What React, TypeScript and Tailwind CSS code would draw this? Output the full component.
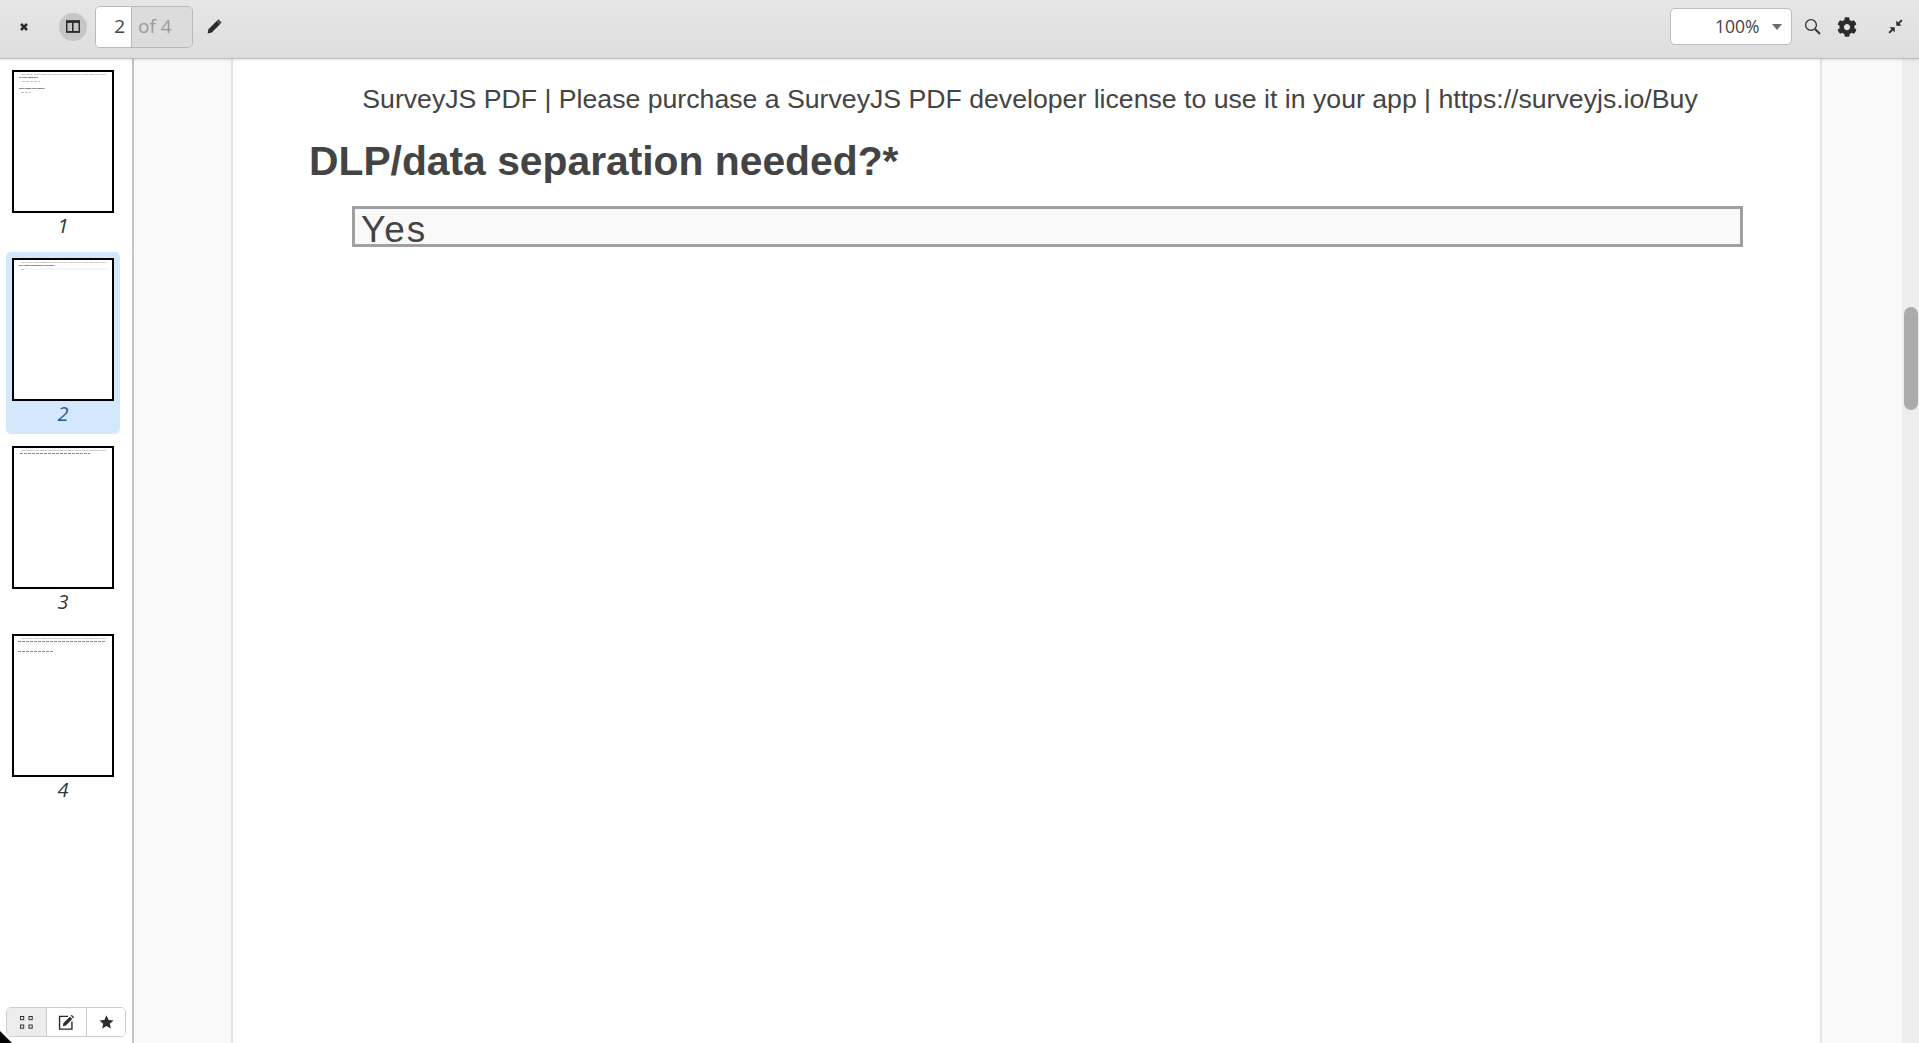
import React from 'react';
import { FaCog } from 'react-icons/fa';

const XIcon = () => (
  <svg width="10" height="10" viewBox="0 0 10 10" className="text-[#2c2c2c]">
    <path d="M2 2l6 6M8 2l-6 6" stroke="currentColor" strokeWidth="2.5" />
  </svg>
);

const SidebarIcon = () => (
  <svg width="14" height="13" viewBox="0 0 14 13">
    <rect x="0.75" y="1" width="12.5" height="11" fill="none" stroke="#2c2c2c" strokeWidth="1.5" />
    <rect x="0" y="0.5" width="14" height="2.4" fill="#2c2c2c" />
    <rect x="0" y="11" width="14" height="1.6" fill="#2c2c2c" />
    <rect x="6" y="1" width="1.6" height="11" fill="#2c2c2c" />
  </svg>
);

const PencilIcon = () => (
  <svg width="15" height="15" viewBox="0 0 15 15">
    <path d="M0.6 14.4l0.9-4.2L9.9 1.8l3.3 3.3-8.4 8.4z" fill="#2c2c2c" />
    <path d="M10.9 0.8l0.6-0.3 3 3-0.3 0.6-0.7 0.7-3.3-3.3z" fill="#2c2c2c" />
  </svg>
);

const SearchIcon = () => (
  <svg width="17" height="17" viewBox="0 0 17 17" fill="none" stroke="#333">
    <circle cx="7" cy="7" r="5.4" strokeWidth="1.3" />
    <path d="M11 11l5 5" strokeWidth="2" />
  </svg>
);

const CollapseIcon = () => (
  <svg width="15" height="15" viewBox="0 0 13 13">
    <path d="M12.6 1.6L10 4.2l1.6 1.6H7.2V1.4l1.6 1.6L11.4 0.4z" fill="#2c2c2c" />
    <path d="M0.4 11.4l2.6-2.6-1.6-1.6h4.4v4.4l-1.6-1.6-2.6 2.6z" fill="#2c2c2c" />
  </svg>
);

const GridIcon = () => (
  <svg width="13" height="13" viewBox="0 0 13 13" fill="none" stroke="#333" strokeWidth="1">
    <rect x="0.5" y="0.5" width="3.2" height="3.2" />
    <rect x="9" y="0.5" width="3.2" height="3.2" />
    <rect x="0.5" y="9" width="3.2" height="3.2" />
    <rect x="9" y="9" width="3.2" height="3.2" />
  </svg>
);

const NoteIcon = () => (
  <svg width="17" height="16" viewBox="0 0 15 15">
    <path d="M9 2.2H1v12h11.6V7" fill="none" stroke="#2c2c2c" strokeWidth="1.3" />
    <path d="M4 11.4l0.7-2.9 6-6 2.2 2.2-6 6z" fill="#2c2c2c" />
    <path d="M11.5 1.7l0.9-0.9 2.2 2.2-0.9 0.9z" fill="#2c2c2c" />
  </svg>
);

const StarIcon = () => (
  <svg width="15" height="14" viewBox="0 0 15 14">
    <path d="M7.5 0.3l2.1 4.6 5 .5-3.8 3.3 1.1 4.9-4.4-2.5-4.4 2.5 1.1-4.9L0.4 5.4l5-.5z" fill="#2c2c2c" />
  </svg>
);

const NOTICE = 'SurveyJS PDF | Please purchase a SurveyJS PDF developer license to use it in your app | https://surveyjs.io/Buy';

// tiny marks on the page previews; the wording there can't be read, dash bars stand in for it
const Dashes = ({ left, top, width, strong }: { left: number; top: number; width: number; strong?: boolean }) => (
  <div
    className={`absolute h-[1px] bg-[repeating-linear-gradient(90deg,currentColor_0,currentColor_3px,transparent_3px,transparent_4px)] ${strong ? 'text-[#8a8a8a]' : 'text-[#c4c4c4]'}`}
    style={{ left, top, width }}
  />
);

const Notice = () => (
  <div className="absolute left-0 right-0 top-[1px] whitespace-nowrap pl-[2px] text-center text-[1.7px] leading-[2px] text-[#666]">{NOTICE}</div>
);

const Heading = ({ top, children }: { top: number; children: React.ReactNode }) => (
  <div className="absolute left-[5px] whitespace-nowrap text-[2.5px] font-bold leading-[3px] text-[#222]" style={{ top }}>
    {children}
  </div>
);

const Thumb = ({ label, outer, selected, children }: { label: string; outer: string; selected?: boolean; children: React.ReactNode }) => (
  <div className={`w-[114px] rounded-[5px] px-[6px] ${outer} ${selected ? 'bg-[#d3e8fd]' : ''}`}>
    <div className="relative h-[143px] w-[102px] overflow-hidden border-2 border-black bg-white">{children}</div>
    <div className={`h-[26px] text-center font-['Open_Sans',sans-serif] text-[20px] italic leading-[26px] ${selected ? 'text-[#2b5b85]' : 'text-[#333]'}`}>
      {label}
    </div>
  </div>
);

const App: React.FC = () => {
  return (
    <div className="relative flex h-[1043px] w-[1919px] flex-col overflow-hidden bg-white font-['Liberation_Sans',sans-serif]">
      {/* Toolbar */}
      <header className="z-10 flex h-[59px] flex-none items-center border-b border-[#bdbdbd] bg-gradient-to-b from-[#e6e6e6] to-[#dedede] pb-[5px] font-['Open_Sans',sans-serif] shadow-[0_1px_3px_rgba(0,0,0,0.12)]">
        <div className="ml-[19px] flex w-[10px] justify-center"><XIcon /></div>
        <div className="ml-[30px] flex h-[28px] w-[28px] items-center justify-center rounded-full bg-[#c6c6c6]"><SidebarIcon /></div>
        <div className="ml-[8px] flex h-[42px] w-[98px] overflow-hidden rounded-[5px] border border-[#b9b9b9] text-[19px]">
          <div className="w-[36px] border-r border-[#b9b9b9] bg-white pr-[6px] text-right leading-[38px] text-[#444]">2</div>
          <div className="flex-1 bg-[#dcdcdc] pl-[6px] leading-[38px] text-[#9a9a9a]">of 4</div>
        </div>
        <div className="ml-[14px] flex"><PencilIcon /></div>
        <div className="ml-auto flex h-[37px] w-[122px] items-center rounded-[5px] border border-[#bdbdbd] bg-white pl-[44px] text-[17.5px] text-[#444]">
          100%
          <div className="ml-[12px] h-0 w-0 border-x-[5.5px] border-t-[6.5px] border-x-transparent border-t-[#6b6b6b]" />
        </div>
        <div className="ml-[12px] flex"><SearchIcon /></div>
        <FaCog className="ml-[16px] h-[20px] w-[20px] text-[#2c2c2c]" />
        <div className="ml-[31px] mr-[16px] flex"><CollapseIcon /></div>
      </header>

      <div className="flex min-h-0 flex-1">
        {/* Sidebar */}
        <aside className="flex w-[134px] flex-none flex-col border-r-2 border-[#c4c4c4] bg-white">
          <div className="flex-1 pl-[6px]">
            <Thumb label="1" outer="pt-[11px] pb-[13px]">
              <Notice />
              <Heading top={4}>Is your data ok?</Heading>
              <Dashes left={8} top={9} width={18} />
              <Heading top={15}>Who owns this data?*</Heading>
              <Dashes left={7} top={20} width={10} />
            </Thumb>
            <Thumb label="2" outer="pt-[6px] pb-[7px]" selected>
              <Notice />
              <Heading top={4}>DLP/data separation needed?*</Heading>
              <div className="absolute left-[8px] top-[8px] h-[2px] w-[87px] bg-[#f6f6f6]" />
              <Dashes left={7} top={9} width={4} />
            </Thumb>
            <Thumb label="3" outer="pt-[12px] pb-[10px]">
              <Notice />
              <Dashes left={6} top={5} width={70} strong />
            </Thumb>
            <Thumb label="4" outer="pt-[9px]">
              <Notice />
              <Dashes left={4} top={5} width={87} strong />
              <Dashes left={4} top={15} width={36} strong />
            </Thumb>
          </div>
          <div className="mb-[6px] ml-[6px] flex h-[30px] w-[120px] overflow-hidden rounded-[5px] border border-[#cdcdcd]">
            <div className="flex w-[40px] items-center justify-center border-r border-[#cdcdcd] bg-[#ededed]"><GridIcon /></div>
            <div className="flex w-[40px] items-center justify-center border-r border-[#cdcdcd] bg-white"><NoteIcon /></div>
            <div className="flex flex-1 items-center justify-center bg-white"><StarIcon /></div>
          </div>
        </aside>

        {/* Document */}
        <main className="flex min-w-0 flex-1 bg-[#fafafa]">
          <div className="flex-1 pl-[97px]">
            <article className="h-full w-[1591px] border-x-2 border-[#e4e4e4] bg-white pt-[20px] text-[#444]">
              <div className="pl-[7px] text-center text-[26.66px] leading-[40px]">{NOTICE}</div>
              <h1 className="ml-[76px] mt-[18px] text-[40.8px] font-bold leading-[48px]">DLP/data separation needed?*</h1>
              <div className="ml-[119px] mt-[21px] h-[41px] w-[1391px] border-[3px] border-[#a0a0a0] bg-[#f9f9f9] pl-[6px] text-[37px] leading-[41px] tracking-[2px]">
                Yes
              </div>
            </article>
          </div>
          {/* Scrollbar */}
          <div className="w-[17px] flex-none bg-[#eeeeee] pl-[2px] pt-[248px]">
            <div className="h-[103px] w-[14px] rounded-full bg-[#ababab]" />
          </div>
        </main>
      </div>

      {/* Window corner */}
      <div className="absolute bottom-0 left-0 h-0 w-0 border-b-[12px] border-r-[12px] border-b-black border-r-transparent" />
    </div>
  );
};

export default App;
